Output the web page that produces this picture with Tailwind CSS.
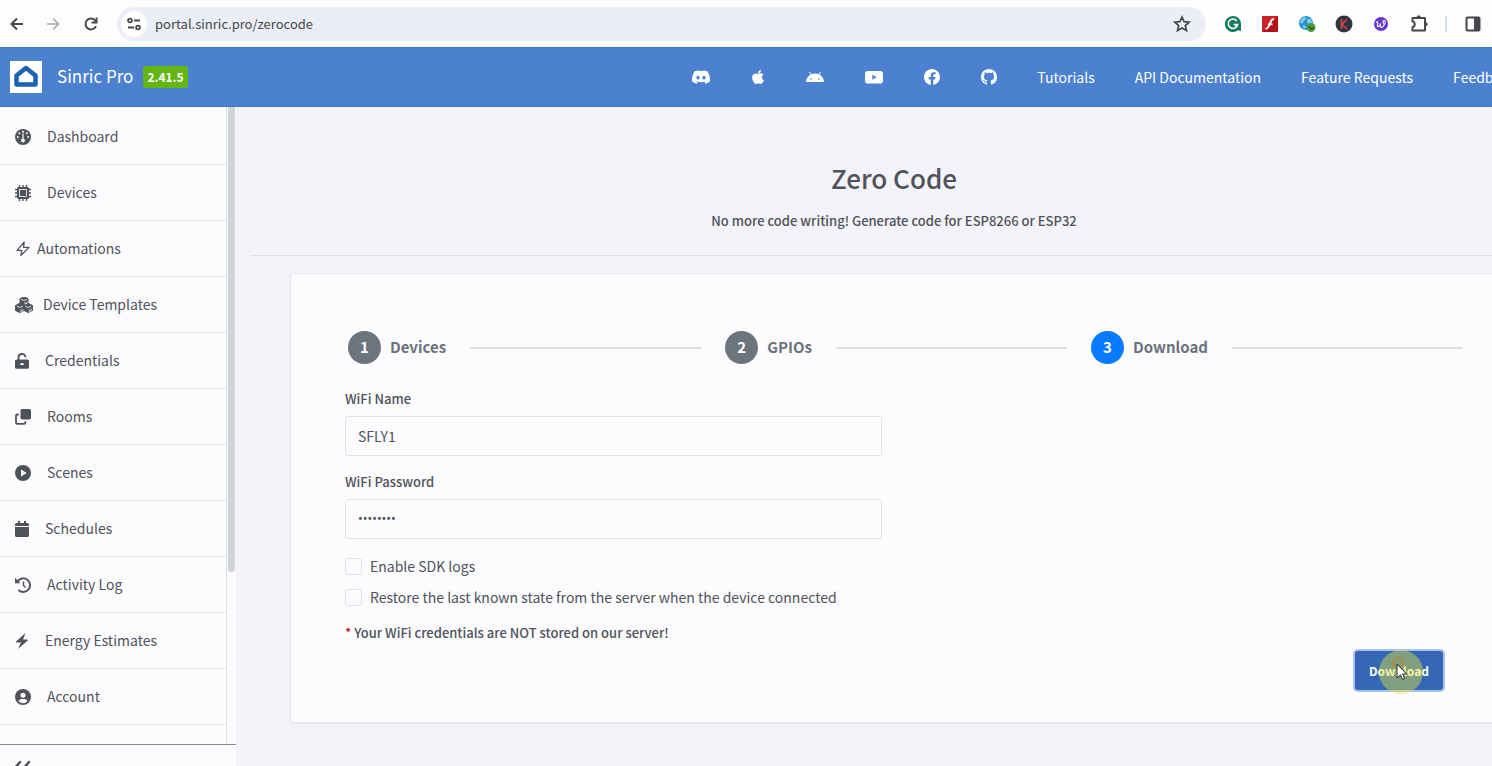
<!DOCTYPE html>
<html lang="en">
  <head>
    <meta charset="UTF-8" />
    <meta name="viewport" content="width=device-width, initial-scale=1.0" />
    <title>Sinric Pro - Zero Code</title>
    <script src="https://cdn.jsdelivr.net/npm/@tailwindcss/browser@4"></script>
  </head>
  <body class="h-screen flex flex-col overflow-hidden bg-[#f4f3f9] text-[#4f525b] text-[14px] font-['Noto_Sans_CJK_SC','Noto_Sans',sans-serif]">
    <!-- Browser Bar Start -->
    <div class="h-[47px] shrink-0 bg-[#fefdfe] flex items-center pl-2 pr-[10px] text-[#45474a]">
      <button aria-label="Back" class="w-[18px] h-[18px]">
        <svg viewBox="0 0 18 18" fill="none" stroke="currentColor" stroke-width="2"><path d="M15 9H3.500M9 3.500L3.500 9 9 14.500" /></svg>
      </button>
      <button aria-label="Forward" class="w-[18px] h-[18px] ml-[18px] text-[#a9abae]">
        <svg viewBox="0 0 18 18" fill="none" stroke="currentColor" stroke-width="1.700"><path d="M3 9h11.500M9 3.500L14.500 9 9 14.500" /></svg>
      </button>
      <button aria-label="Reload" class="w-[18px] h-[18px] ml-5">
        <svg viewBox="0 0 18 18" fill="none" stroke="currentColor" stroke-width="1.900"><path d="M14 11.200A5.500 5.500 0 1 1 12.800 5l1.700 1.700" /><path d="M14.600 2.500v5h-5" /></svg>
      </button>
      <div class="flex-1 h-[34px] ml-[17px] rounded-full bg-[#eceef7] flex items-center pl-1 pr-[14px]">
        <button aria-label="Site information" class="w-[26px] h-[26px] rounded-full bg-white flex items-center justify-center">
          <svg class="w-[16px] h-[16px]" viewBox="0 0 16 16" fill="none" stroke="currentColor" stroke-width="1.800"><circle cx="4" cy="4.500" r="1.900" /><path d="M8 4.500h6M2 11.500h6" /><circle cx="12" cy="11.500" r="1.900" /></svg>
        </button>
        <input aria-label="Address" value="portal.sinric.pro/zerocode" class="flex-1 ml-2 bg-transparent outline-none text-[13px]" />
        <button aria-label="Bookmark" class="w-[20px] h-[20px]">
          <svg viewBox="0 0 20 20" fill="none" stroke="currentColor" stroke-width="1.700" stroke-linejoin="miter"><path d="M10 3l2.100 4.700 5.100.5-3.900 3.400 1.200 5L10 13.900l-4.500 2.700 1.200-5-3.900-3.400 5.100-.5z" /></svg>
        </button>
      </div>
      <div class="flex items-center ml-[18px] gap-[19px]">
        <svg class="w-[18px] h-[18px]" viewBox="0 0 18 18"><path d="M9 1a8 8 0 0 1 8 8v7l-3-.8A8 8 0 1 1 9 1z" fill="#147a5c" /><path d="M12.800 6A4.700 4.700 0 1 0 13.600 9.500H9.500M11.300 11.800l2.300-2.300" fill="none" stroke="#fff" stroke-width="1.600" /></svg>
        <svg class="w-[18px] h-[18px]" viewBox="0 0 18 18"><rect x="1" y="1" width="16" height="16" fill="#b31217" /><path d="M1 17V1h16z" fill="#cf2228" /><path d="M13 4c-3 0-3.300 2.600-4.200 5S7 13.700 4.500 14M7 9.300h4.500" fill="none" stroke="#fff" stroke-width="1.900" /></svg>
        <svg class="w-[18px] h-[18px]" viewBox="0 0 18 18"><circle cx="8" cy="8" r="7" fill="#2491d3" /><path d="M3 4l4-2.500 1 2-2 2.500-2 3-2-2zM9 4l4 0 1 4-3 1-2-2zM5 10l3 1-1 3-2-1z" fill="#7fcdf0" /><circle cx="13" cy="12.500" r="4.500" fill="#4f9a3b" /><path d="M10.800 11.500l2.300 2.500 2.500-1" fill="none" stroke="#1f4f21" stroke-width="1.400" /></svg>
        <svg class="w-[18px] h-[18px]" viewBox="0 0 18 18"><circle cx="9" cy="9" r="8.500" fill="#2e3440" /><path d="M6.500 4v10M12 4L7 9.500 12.200 14" fill="none" stroke="#d9454c" stroke-width="1.600" /></svg>
        <svg class="w-[18px] h-[18px]" viewBox="0 0 18 18"><circle cx="9" cy="9" r="7" fill="#6437cc" /><path d="M4 7.500c2-1.500 2 0 1.500 2.500s2 2.500 3-1.500c-.5 4 .5 5 2.500 3s3-5.500 1.500-6-2 2.500-.5 3.500" fill="none" stroke="#f1eaff" stroke-width="1.200" /></svg>
        <button aria-label="Extensions" class="w-[20px] h-[20px]">
          <svg viewBox="0 0 20 20" fill="none" stroke="currentColor" stroke-width="2" stroke-linejoin="round"><path d="M3.500 4H16v12.500H3.500v-3.300a3 3 0 0 0 0-5.800z" /><path d="M8 3.500a1.700 1.700 0 0 1 3.400 0zM16.500 8.500a1.700 1.700 0 0 1 0 3.400z" fill="currentColor" stroke-width="1" /></svg>
        </button>
      </div>
      <div class="w-[2px] h-4 bg-[#d5def3] ml-4"></div>
      <button aria-label="Side panel" class="w-[18px] h-[18px] ml-[17px]">
        <svg viewBox="0 0 18 18"><rect x="2.500" y="2.500" width="13" height="13" rx="1" fill="none" stroke="currentColor" stroke-width="2" /><path d="M10 2h6v14h-6z" fill="currentColor" /></svg>
      </button>
    </div>
    <!-- Browser Bar End -->

    <!-- Top Navbar Start -->
    <header class="h-[60px] shrink-0 bg-[#4b81cf] border-y border-y-[#4276c1] text-white text-[14px] flex items-center pl-[10px]">
      <a href="#" class="flex items-center">
        <svg class="w-8 h-8 bg-white" viewBox="0 0 32 32" fill="none" stroke="#1b62b3" stroke-width="4.500" stroke-linejoin="round"><path d="M6.500 14.500L16 7l9.500 7.500v9h-19z" /></svg>
        <span class="ml-[15px] pb-[3px] text-[17px]">Sinric Pro</span>
      </a>
      <span class="ml-[10px] px-1 h-[22px] leading-[22px] rounded-[3px] bg-[#62b512] text-[12px] font-bold">2.41.5</span>
      <nav class="ml-auto -mr-6 shrink-0 flex items-center gap-10 whitespace-nowrap">
        <div class="flex items-center gap-[41px]">
          <a href="#" aria-label="Discord"><svg class="w-[18px] h-[18px]" viewBox="0 0 16 16" fill="currentColor"><path d="M13.545 2.907a13.200 13.200 0 0 0-3.257-1.011.05.05 0 0 0-.052.025c-.141.25-.297.577-.406.833a12.200 12.200 0 0 0-3.658 0 8 8 0 0 0-.412-.833.05.05 0 0 0-.052-.025c-1.125.194-2.220.534-3.257 1.011a.04.04 0 0 0-.021.018C.356 6.024-.213 9.047.066 12.032q.003.022.021.037a13.300 13.300 0 0 0 3.995 2.020.05.05 0 0 0 .056-.019q.463-.63.818-1.329a.05.05 0 0 0-.01-.059l-.018-.011a9 9 0 0 1-1.248-.595.05.05 0 0 1-.02-.066l.015-.019q.127-.095.248-.195a.05.05 0 0 1 .051-.007c2.619 1.196 5.454 1.196 8.041 0a.05.05 0 0 1 .053.007q.121.1.248.195a.05.05 0 0 1-.004.085 8 8 0 0 1-1.249.594.05.05 0 0 0-.03.03.05.05 0 0 0 .003.041c.24.465.515.909.817 1.329a.05.05 0 0 0 .056.019 13.200 13.200 0 0 0 4.001-2.020.05.05 0 0 0 .021-.037c.334-3.451-.559-6.449-2.366-9.106a.03.03 0 0 0-.02-.019m-8.198 7.307c-.789 0-1.438-.724-1.438-1.612s.637-1.613 1.438-1.613c.807 0 1.450.73 1.438 1.613 0 .888-.637 1.612-1.438 1.612m5.316 0c-.788 0-1.438-.724-1.438-1.612s.637-1.613 1.438-1.613c.807 0 1.451.73 1.438 1.613 0 .888-.631 1.612-1.438 1.612" /></svg></a>
          <a href="#" aria-label="Apple"><svg class="w-[14px] h-4" viewBox="0 0 384 512" fill="currentColor"><path d="M318.700 268.700c-.2-36.700 16.400-64.400 50-84.800-18.800-26.900-47.200-41.700-84.700-44.600-35.500-2.800-74.300 20.700-88.500 20.700-15 0-49.400-19.700-76.400-19.700C63.300 141.200 4 184.800 4 273.500q0 39.300 14.400 81.200c12.800 36.700 59 126.700 107.200 125.200 25.200-.6 43-17.900 75.800-17.900 31.800 0 48.300 17.900 76.400 17.900 48.600-.7 90.400-82.500 102.600-119.300-65.200-30.700-61.700-90-61.700-91.900zm-56.600-164.200c27.300-32.400 24.800-61.900 24-72.500-24.100 1.400-52 16.400-67.900 34.900-17.500 19.800-27.800 44.300-25.600 71.900 26.100 2 49.900-11.400 69.500-34.300z" /></svg></a>
          <a href="#" aria-label="Android"><svg class="w-[18px] h-4" viewBox="0 0 18 16"><path d="M0 13a9 8.500 0 0 1 18 0z" fill="currentColor" /><path d="M3.500 3l2 3M14.500 3l-2 3" stroke="currentColor" stroke-width="1" /><circle cx="5" cy="10" r=".8" fill="#4b81cf" /><circle cx="13" cy="10" r=".8" fill="#4b81cf" /></svg></a>
          <a href="#" aria-label="YouTube"><svg class="w-[18px] h-4" viewBox="0 0 18 16"><rect x="0" y="2" width="18" height="12.500" rx="2.800" fill="currentColor" /><path d="M7.300 5.700v5l4.300-2.500z" fill="#4b81cf" /></svg></a>
          <a href="#" aria-label="Facebook"><svg class="w-4 h-4" viewBox="0 0 16 16" fill="currentColor"><path d="M16 8.049c0-4.446-3.582-8.050-8-8.050C3.580 0-.002 3.603-.002 8.050c0 4.017 2.926 7.347 6.750 7.951v-5.625h-2.030V8.050H6.750V6.275c0-2.017 1.195-3.131 3.022-3.131.876 0 1.791.157 1.791.157v1.980h-1.009c-.993 0-1.303.621-1.303 1.258v1.510h2.218l-.354 2.326H9.250V16c3.824-.604 6.750-3.934 6.750-7.951" /></svg></a>
          <a href="#" aria-label="GitHub"><svg class="w-4 h-4" viewBox="0 0 16 16" fill="currentColor"><path d="M8 0C3.580 0 0 3.580 0 8c0 3.540 2.290 6.530 5.470 7.590.4.070.55-.17.55-.38 0-.19-.01-.82-.01-1.490-2.010.37-2.530-.49-2.690-.94-.09-.23-.48-.94-.82-1.130-.28-.15-.68-.52-.01-.53.63-.01 1.080.58 1.230.82.72 1.210 1.870.87 2.330.66.07-.52.28-.87.51-1.070-1.780-.2-3.640-.89-3.640-3.950 0-.87.31-1.590.82-2.150-.08-.2-.36-1.020.08-2.120 0 0 .67-.21 2.200.82.64-.18 1.320-.27 2-.27.68 0 1.360.09 2 .27 1.530-1.040 2.200-.82 2.200-.82.44 1.100.16 1.920.08 2.120.51.56.82 1.270.82 2.150 0 3.070-1.870 3.750-3.650 3.950.29.25.54.73.54 1.480 0 1.070-.01 1.930-.01 2.200 0 .21.15.46.55.38A8.013 8.013 0 0016 8c0-4.420-3.580-8-8-8z" /></svg></a>
        </div>
        <a href="#">Tutorials</a>
        <a href="#">API Documentation</a>
        <a href="#">Feature Requests</a>
        <a href="#">Feedback</a>
      </nav>
    </header>
    <!-- Top Navbar End -->

    <div class="flex flex-1 min-h-0">
      <!-- Sidebar Start -->
      <aside class="w-[236px] shrink-0 flex flex-col bg-[#fcfcfe]">
        <div class="flex flex-1 min-h-0">
          <nav class="flex-1 overflow-hidden pt-[2px] border-r border-[#dfe1e6]">
            <a href="#" class="h-14 flex items-center border-b border-[#e4e5ea] pl-[15px] gap-4">
              <svg class="w-4 h-4" viewBox="0 0 16 16"><circle cx="8" cy="8" r="8" fill="currentColor" /><g fill="#fcfcfe"><circle cx="8" cy="2.800" r="1" /><circle cx="4.300" cy="4.300" r="1" /><circle cx="11.700" cy="4.300" r="1" /><circle cx="2.800" cy="8" r="1" /><circle cx="13.200" cy="8" r="1" /><circle cx="8" cy="11.500" r="1.900" /><path d="M7.400 4.500h1.200v7H7.400z" /></g></svg>
              Dashboard
            </a>
            <a href="#" class="h-14 flex items-center border-b border-[#e4e5ea] pl-[15px] gap-4">
              <svg class="w-4 h-4" viewBox="0 0 16 16"><path d="M4.500 0v16M8 0v16M11.500 0v16M0 4.500h16M0 8h16M0 11.500h16" stroke="currentColor" stroke-width="1.300" /><rect x="2" y="2" width="12" height="12" rx="1.500" fill="currentColor" /><rect x="4.500" y="4.500" width="7" height="7" fill="none" stroke="#fcfcfe" stroke-width=".8" /></svg>
              Devices
            </a>
            <a href="#" class="h-14 flex items-center border-b border-[#e4e5ea] pl-[15px] gap-[6px]">
              <svg class="w-4 h-4" viewBox="0 0 16 16" fill="none" stroke="currentColor" stroke-width="1.200" stroke-linejoin="round"><path d="M9.300 1L2 9.300h4.800L5.800 14.500 14 6.300H8.500z" /></svg>
              Automations
            </a>
            <a href="#" class="h-14 flex items-center border-b border-[#e4e5ea] pl-[15px] gap-[10px]">
              <svg class="w-[18px] h-4" viewBox="0 0 18 16"><path d="M9 0l4 1.600v4.600L17.500 8.500v5L13.300 15.600 9 13.500 4.700 15.600.5 13.500v-5L5 6.200V1.600z" fill="currentColor" stroke="currentColor" stroke-linejoin="round" /><path d="M6 2.300l3 1.300 3-1.300M10 5.200v2l2.200-1V4.500M1.800 9.200l3 1.300 3-1.300M5.800 12.500v2l2-1v-1.800M10.200 9.200l3 1.300 3-1.300M14.300 12.500v2l2-1v-1.800" fill="none" stroke="#fcfcfe" stroke-width=".8" /></svg>
              Device Templates
            </a>
            <a href="#" class="h-14 flex items-center border-b border-[#e4e5ea] pl-[15px] gap-4">
              <svg class="w-[14px] h-4" viewBox="0 0 14 16"><path d="M3.500 7V4.300a3.500 3.500 0 0 1 6.900-.7" fill="none" stroke="currentColor" stroke-width="1.900" stroke-linecap="round" /><rect y="6.500" width="14" height="9.300" rx="1.600" fill="currentColor" /><rect x="5" y="10.200" width="4" height="1.700" rx=".8" fill="#fcfcfe" /></svg>
              Credentials
            </a>
            <a href="#" class="h-14 flex items-center border-b border-[#e4e5ea] pl-[15px] gap-4">
              <svg class="w-4 h-4" viewBox="0 0 16 16"><rect x="5.500" width="10.500" height="10.500" rx="1.800" fill="currentColor" /><path d="M3.800 5.500H2.200A1.200 1.200 0 0 0 1 6.700v7a1.200 1.200 0 0 0 1.200 1.200h7a1.200 1.200 0 0 0 1.200-1.200v-1.500" fill="none" stroke="currentColor" stroke-width="1.800" /></svg>
              Rooms
            </a>
            <a href="#" class="h-14 flex items-center border-b border-[#e4e5ea] pl-[15px] gap-4">
              <svg class="w-4 h-4" viewBox="0 0 16 16"><circle cx="8" cy="8" r="8" fill="currentColor" /><path d="M6 4.600v6.800L11.700 8z" fill="#fcfcfe" /></svg>
              Scenes
            </a>
            <a href="#" class="h-14 flex items-center border-b border-[#e4e5ea] pl-[15px] gap-4">
              <svg class="w-[14px] h-4" viewBox="0 0 14 16" fill="currentColor"><path d="M3 0h2v2h4V0h2v2h1.500A1.500 1.500 0 0 1 14 3.500V5H0V3.500A1.500 1.500 0 0 1 1.500 2H3zM0 6h14v8.500a1.500 1.500 0 0 1-1.500 1.500h-11A1.500 1.500 0 0 1 0 14.500z" /></svg>
              Schedules
            </a>
            <a href="#" class="h-14 flex items-center border-b border-[#e4e5ea] pl-[15px] gap-4">
              <svg class="w-4 h-4" viewBox="0 0 16 16" fill="none" stroke="currentColor"><path d="M2.500 4.500A6.800 6.800 0 1 1 4 13.500" stroke-width="1.900" stroke-linecap="round" /><path d="M0 .8v5.400h5.400z" fill="currentColor" stroke="none" /><path d="M8.500 4.500V8.500l2 2" stroke-width="1.400" /></svg>
              Activity Log
            </a>
            <a href="#" class="h-14 flex items-center border-b border-[#e4e5ea] pl-[15px] gap-4">
              <svg class="w-[14px] h-4" viewBox="0 0 14 16" fill="currentColor"><path d="M10.500 0L1 8.500a.6.6 0 0 0 .4 1H6L3 16l9.700-8.500a.6.6 0 0 0-.4-1H8z" /></svg>
              Energy Estimates
            </a>
            <a href="#" class="h-14 flex items-center border-b border-[#e4e5ea] pl-[15px] gap-4">
              <svg class="w-4 h-4" viewBox="0 0 16 16"><circle cx="8" cy="8" r="8" fill="currentColor" /><circle cx="8" cy="6.200" r="2.500" fill="#fcfcfe" /><path d="M3.500 12.300a4 3 0 0 1 3-2.300h3a4 3 0 0 1 3 2.300 6 6 0 0 1-9 0z" fill="#fcfcfe" /></svg>
              Account
            </a>
          </nav>
          <!-- Scroll track -->
          <div class="w-[9px] px-px">
            <div class="h-[73%] rounded-b-sm bg-[#d0d5da]"></div>
          </div>
        </div>
        <button aria-label="Collapse menu" class="h-12 -mb-[26px] shrink-0 border-t border-[#8b8d94] pl-3 flex items-center">
          <svg class="w-5 h-5" viewBox="0 0 20 20" fill="none" stroke="currentColor" stroke-width="2.500" stroke-linecap="round" stroke-linejoin="round"><path d="M8 3L2 10l6 7M17 3l-6 7 6 7" /></svg>
        </button>
      </aside>
      <!-- Sidebar End -->

      <!-- Main Content Start -->
      <main class="flex-1 -mr-[46px] pl-[14px]">
        <div class="pt-[51px] pb-6 border-b border-[#e0e1e6] text-center">
          <h1 class="text-[26px] leading-10 font-medium">Zero Code</h1>
          <p class="mt-[13px] text-[13px] leading-5 font-medium">No more code writing! Generate code for ESP8266 or ESP32</p>
        </div>

        <div class="mt-[17px] ml-10 mr-5 bg-[#fcfcfe] border border-[#e6e7ed] rounded-sm shadow-xs px-[54px] pt-[57px] pb-8">
          <!-- Stepper -->
          <ol class="flex items-center gap-6 pl-[3px] text-[15px] font-bold text-[#6c727b]">
            <li class="flex items-center gap-[9px]"><span class="w-[33px] h-[33px] rounded-full bg-[#6c757d] text-white flex items-center justify-center">1</span>Devices</li>
            <li aria-hidden="true" class="flex-1 h-[2px] bg-[#dddfe3]"></li>
            <li class="flex items-center gap-[9px]"><span class="w-[33px] h-[33px] rounded-full bg-[#6c757d] text-white flex items-center justify-center">2</span>GPIOs</li>
            <li aria-hidden="true" class="flex-1 h-[2px] bg-[#dddfe3]"></li>
            <li class="flex items-center gap-[9px]"><span class="w-[33px] h-[33px] rounded-full bg-[#077bff] text-white flex items-center justify-center">3</span>Download</li>
            <li aria-hidden="true" class="flex-1 h-[2px] bg-[#dddfe3]"></li>
          </ol>

          <form>
            <div class="w-1/2 pr-[22px] pt-[25px]">
              <label for="wifi-name" class="block text-[13px] leading-5 font-medium">WiFi Name</label>
              <input id="wifi-name" type="text" value="SFLY1" class="block w-full h-10 mt-[7px] px-3 border border-[#e1e2e8] rounded-[3px] bg-transparent outline-none" />
              <label for="wifi-password" class="block mt-4 text-[13px] leading-5 font-medium">WiFi Password</label>
              <input id="wifi-password" type="password" value="sfly1234" class="block w-full h-10 mt-[7px] px-3 border border-[#e1e2e8] rounded-[3px] bg-transparent outline-none font-[Roboto,sans-serif]" />
            </div>
            <div class="mt-3 flex flex-col">
              <label class="h-[31px] flex items-center gap-2"><input type="checkbox" class="appearance-none w-[17px] h-[17px] border border-[#dfe0e7] rounded-[3px]" />Enable SDK logs</label>
              <label class="h-[31px] flex items-center gap-2"><input type="checkbox" class="appearance-none w-[17px] h-[17px] border border-[#dfe0e7] rounded-[3px]" />Restore the last known state from the server when the device connected</label>
            </div>
            <p class="mt-[10px] text-[13px] leading-5 font-medium"><span class="text-[#c8102e]">*</span> Your WiFi credentials are NOT stored on our server!</p>
            <div class="flex justify-end mt-2 mr-5">
              <div class="relative">
                <button type="button" class="block w-[88px] h-[39px] rounded-[3px] bg-[#3567b7] ring-2 ring-[#a9c1ee] text-white text-[12px] font-bold">Download</button>
                <!-- Click highlight and pointer -->
                <span class="absolute left-[24px] -top-px w-[44px] h-[44px] rounded-full bg-[#dfe63c]/45 pointer-events-none"></span>
                <svg class="absolute left-[36px] top-[6px] w-4 h-6 pointer-events-none" viewBox="0 0 16 24"><circle cx="7" cy="6" r="5" fill="none" stroke="#a98c3c" stroke-width="2" /><path d="M6 7v14l3.500-3.200 2 4.700 2.200-1-2-4.500h4z" fill="#fff" stroke="#222" stroke-width="1" /></svg>
              </div>
            </div>
          </form>
        </div>
      </main>
      <!-- Main Content End -->
    </div>
  </body>
</html>
